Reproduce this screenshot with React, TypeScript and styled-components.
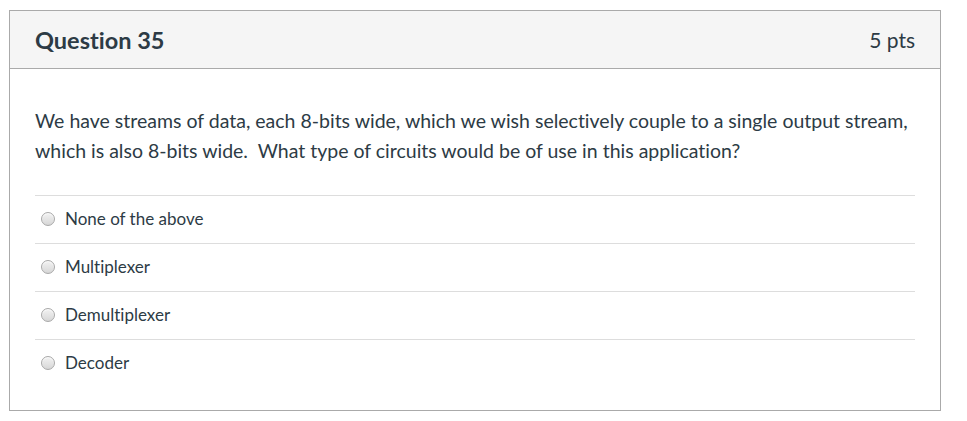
import React from "react";
import styled, { createGlobalStyle } from "styled-components";

const Global = createGlobalStyle`
  html, body { margin: 0; padding: 0; background: #fff; }
  body {
    font-family: Lato, "Liberation Sans", sans-serif;
    color: #2d3b45;
    font-variant-ligatures: none;
  }
`;

const Page = styled.div`
  padding: 10px 26px 10px 9px;
`;

const Card = styled.div`
  border: 1px solid #aaaaaa;
  width: 932px;
  box-sizing: border-box;
  background: #fff;
`;

const Header = styled.div`
  display: flex;
  justify-content: space-between;
  align-items: center;
  height: 57px;
  padding: 0 25px;
  background: #f5f5f5;
  border-bottom: 1px solid #aaaaaa;
`;

const Title = styled.h2`
  margin: 0;
  font-size: 23.5px;
  font-weight: 700;
  color: #2d3b45;
`;

const Points = styled.div`
  font-size: 21px;
  font-weight: 400;
  color: #2d3b45;
`;

const Body = styled.div`
  padding: 37px 25px 23px 25px;
`;

const Text = styled.p`
  margin: 0 0 29px 0;
  font-size: 19.5px;
  line-height: 30px;
  color: #2d3b45;
`;

const Answers = styled.div`
  display: flex;
  flex-direction: column;
`;

const Answer = styled.label`
  display: flex;
  align-items: center;
  gap: 10px;
  height: 44px;
  padding: 0 0 3px 6px;
  border-top: 1px solid #dddddd;
  font-size: 17px;
  color: #2d3b45;
`;

const Radio = styled.span`
  width: 14px;
  height: 14px;
  border-radius: 50%;
  box-sizing: border-box;
  border: 1px solid #a8a8a8;
  background: linear-gradient(180deg, #f2f2f2 0%, #e2e2e2 60%, #d6d6d6 100%);
  box-shadow: inset 0 1px 1px rgba(255, 255, 255, 0.8);
  flex-shrink: 0;
  margin-top: 1px;
`;

const AnswerText = styled.span``;

const answers = ["None of the above", "Multiplexer", "Demultiplexer", "Decoder"];

export default function App() {
  return (
    <>
      <Global />
      <Page>
        <Card>
          <Header>
            <Title>Question 35</Title>
            <Points>5 pts</Points>
          </Header>
          <Body>
            <Text>
              We have streams of data, each 8-bits wide, which we wish selectively couple to a single output stream,
              which is also 8-bits wide.&nbsp; What type of circuits would be of use in this application?
            </Text>
            <Answers>
              {answers.map((a) => (
                <Answer key={a}>
                  <Radio />
                  <AnswerText>{a}</AnswerText>
                </Answer>
              ))}
            </Answers>
          </Body>
        </Card>
      </Page>
    </>
  );
}
